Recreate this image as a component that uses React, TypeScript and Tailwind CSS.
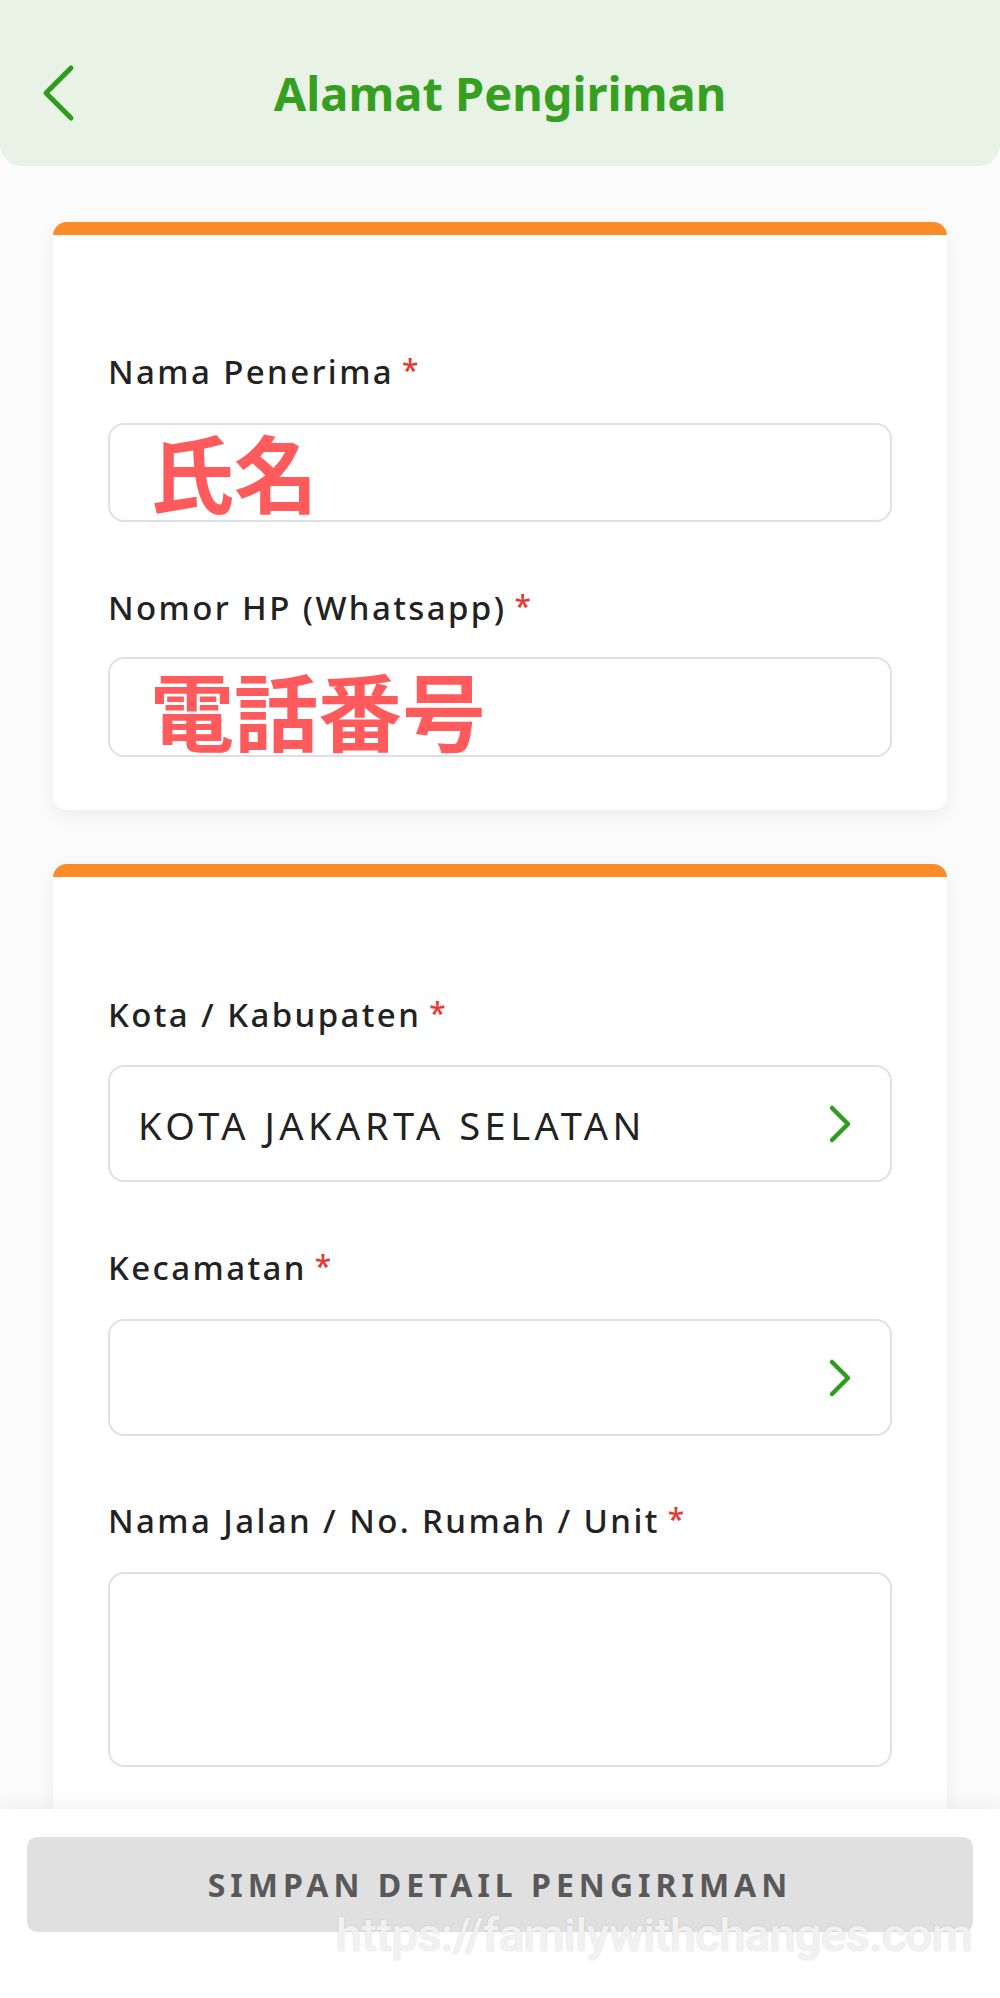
import React from "react";

function Chevron() {
  return (
    <svg width="24" height="40" viewBox="0 0 24 40" fill="none" className="shrink-0">
      <polyline points="4,4 20,20 4,36" stroke="#2e9c1c" strokeWidth="4.5" strokeLinecap="round" strokeLinejoin="round" />
    </svg>
  );
}

function Label({ text }: { text: string }) {
  return (
    <div className="text-[33px] leading-[40px] font-medium text-[#222222] tracking-[2.4px]">
      {text}
      <span className="ml-[8px] text-[#e53935] text-[30px] align-top leading-[36px]">*</span>
    </div>
  );
}

export default function App() {
  return (
    <div className="relative w-[1000px] h-[1998px] flex flex-col bg-[#fbfbfb] overflow-hidden font-['Noto_Sans','Noto_Sans_CJK_JP',sans-serif]">
      <header className="h-[166px] shrink-0 bg-[#e8f3e6] rounded-b-[22px] grid grid-cols-[1fr_auto_1fr] items-center pt-[20px]">
        <div className="pl-[41px] flex items-center">
          <svg width="36" height="58" viewBox="0 0 36 58" fill="none">
            <polyline points="30,4 5,29 30,54" stroke="#2e9c1c" strokeWidth="5" strokeLinecap="round" strokeLinejoin="round" />
          </svg>
        </div>
        <h1 className="text-[47px] font-bold text-[#35a01f] leading-none">Alamat Pengiriman</h1>
        <div />
      </header>

      <main className="flex-1 overflow-hidden px-[53px] pt-[56px] flex flex-col gap-[54px]">
        <section className="bg-white rounded-[14px] shadow-[0_6px_18px_rgba(0,0,0,0.06)] overflow-hidden shrink-0">
          <div className="h-[13px] bg-[#fa8c28]" />
          <div className="px-[55px] pt-[117px] pb-[53px] flex flex-col">
            <Label text="Nama Penerima" />
            <div className="mt-[31px] h-[99px] rounded-[16px] border-2 border-[#dde0e9] flex items-center pl-[40px] pb-[4px]">
              <span className="text-[84px] leading-none font-bold text-[#ff5a5c] font-['Noto_Sans_CJK_JP',sans-serif]">氏名</span>
            </div>
            <div className="mt-[66px]">
              <Label text="Nomor HP (Whatsapp)" />
            </div>
            <div className="mt-[29px] h-[100px] rounded-[16px] border-2 border-[#dde0e9] flex items-center pl-[40px] pt-[4px]">
              <span className="text-[84px] leading-none font-bold text-[#ff5a5c] font-['Noto_Sans_CJK_JP',sans-serif]">電話番号</span>
            </div>
          </div>
        </section>

        <section className="bg-white rounded-t-[14px] shadow-[0_6px_18px_rgba(0,0,0,0.06)] overflow-hidden flex-1">
          <div className="h-[13px] bg-[#fa8c28]" />
          <div className="px-[55px] pt-[118px] flex flex-col">
            <Label text="Kota / Kabupaten" />
            <div className="mt-[30px] h-[117px] rounded-[16px] border-2 border-[#dde0e9] flex items-center justify-between pl-[28px] pr-[38px]">
              <span className="text-[38px] text-[#222222] tracking-[4.5px] pt-[4px]">KOTA JAKARTA SELATAN</span>
              <Chevron />
            </div>
            <div className="mt-[66px]">
              <Label text="Kecamatan" />
            </div>
            <div className="mt-[31px] h-[117px] rounded-[16px] border-2 border-[#dde0e9] flex items-center justify-end pr-[38px]">
              <Chevron />
            </div>
            <div className="mt-[65px]">
              <Label text="Nama Jalan / No. Rumah / Unit" />
            </div>
            <div className="mt-[31px] h-[195px] rounded-[16px] border-2 border-[#dde0e9]" />
          </div>
        </section>
      </main>

      <footer className="h-[189px] shrink-0 bg-white shadow-[0_-6px_16px_rgba(0,0,0,0.05)] px-[27px] pt-[28px] relative z-10">
        <button className="w-full h-[95px] rounded-[10px] bg-[#e0e0e0] flex items-center justify-center">
          <span className="text-[32px] font-bold text-[#595959] tracking-[5px]">SIMPAN DETAIL PENGIRIMAN</span>
        </button>
      </footer>

      <div className="absolute right-[28px] top-[1911px] z-20 text-[47px] leading-none font-medium text-[#f1f1f1] tracking-[-0.6px] font-['Roboto',sans-serif] [text-shadow:0_0_2px_rgba(0,0,0,0.16)]">
        https://familywithchanges.com
      </div>
    </div>
  );
}
